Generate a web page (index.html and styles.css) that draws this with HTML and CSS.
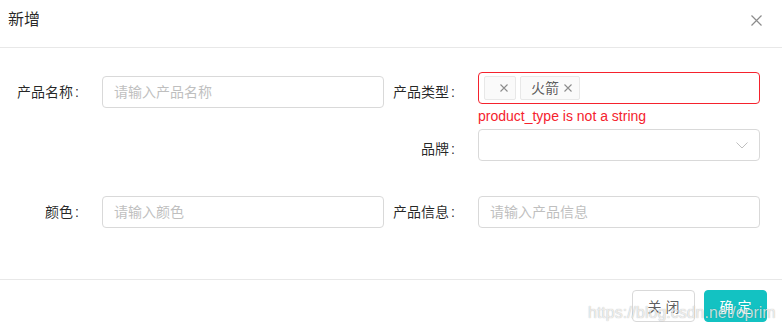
FILE: index.html
```html
<!DOCTYPE html>
<html lang="zh">
<head>
<meta charset="utf-8">
<title>新增</title>
<link rel="stylesheet" href="styles.css">
</head>
<body>
<div class="modal">
  <div class="modal-header">
    <span class="modal-title">新增</span>
    <button class="modal-close" aria-label="关闭">
      <svg width="11" height="11" viewBox="0 0 11 11"><path d="M0.5 0.5 L10.5 10.5 M10.5 0.5 L0.5 10.5" stroke="#8c8c8c" stroke-width="1.2" fill="none"/></svg>
    </button>
  </div>
  <div class="modal-body">
    <div class="form-row row-first">
      <label class="form-label">产品名称<span class="colon">:</span></label>
      <div class="form-control"><input class="input" placeholder="请输入产品名称"></div>
      <label class="form-label">产品类型<span class="colon">:</span></label>
      <div class="form-control control-raised">
        <div class="select select-error">
          <span class="tag"><span class="tag-text"></span><svg class="tag-remove" width="8" height="8" viewBox="0 0 8 8"><path d="M0.5 0.5 L7.5 7.5 M7.5 0.5 L0.5 7.5" stroke="#8c8c8c" stroke-width="1.1" fill="none"/></svg></span>
          <span class="tag"><span class="tag-text">火箭</span><svg class="tag-remove" width="8" height="8" viewBox="0 0 8 8"><path d="M0.5 0.5 L7.5 7.5 M7.5 0.5 L0.5 7.5" stroke="#8c8c8c" stroke-width="1.1" fill="none"/></svg></span>
        </div>
        <div class="error-text">product_type is not a string</div>
      </div>
    </div>
    <div class="form-row row-brand">
      <div class="form-label"></div>
      <div class="form-control"></div>
      <label class="form-label">品牌<span class="colon">:</span></label>
      <div class="form-control control-raised">
        <div class="select">
          <svg class="arrow" width="12" height="7" viewBox="0 0 12 7"><path d="M0.5 0.5 L6 6 L11.5 0.5" stroke="#bfbfbf" stroke-width="1" fill="none"/></svg>
        </div>
      </div>
    </div>
    <div class="form-row row-third">
      <label class="form-label">颜色<span class="colon">:</span></label>
      <div class="form-control"><input class="input" placeholder="请输入颜色"></div>
      <label class="form-label">产品信息<span class="colon">:</span></label>
      <div class="form-control"><input class="input" placeholder="请输入产品信息"></div>
    </div>
  </div>
  <div class="modal-footer">
    <button class="btn">关 闭</button>
    <button class="btn btn-primary">确 定</button>
    <span class="watermark">https://blog.csdn.net/oprim</span>
  </div>
</div>
</body>
</html>
```
FILE: styles.css
```css
* { box-sizing: border-box; }
html, body { margin: 0; padding: 0; background: #fff; }
body {
  font-family: "Liberation Sans", "Noto Sans CJK SC", sans-serif;
  font-size: 14px;
  color: rgba(0,0,0,0.85);
}
.modal { width: 782px; height: 331px; }
.modal-header {
  height: 48px;
  border-bottom: 1px solid #e8e8e8;
  display: flex;
  align-items: flex-start;
  justify-content: space-between;
  padding: 9px 20px 0 8px;
}
.modal-title { font-size: 16px; line-height: 22px; }
.modal-close {
  border: 0; background: none; padding: 0; margin-top: 6px;
  width: 11px; height: 11px; display: block; cursor: pointer;
}
.modal-close svg { display: block; }
.modal-body { height: 231px; padding-top: 28px; }
.form-row {
  display: grid;
  grid-template-columns: 102px 282px 94px 282px;
  align-items: start;
}
.row-brand { margin-top: 7px; }
.row-third { margin-top: 31px; }
.form-label {
  height: 32px;
  line-height: 32px;
  text-align: right;
  padding-right: 23px;
  white-space: nowrap;
}
.colon { margin-left: 2px; }
.control-raised { margin-top: -4px; }
.input {
  display: block;
  width: 100%;
  height: 32px;
  border: 1px solid #d9d9d9;
  border-radius: 4px;
  padding: 4px 11px;
  font: inherit;
  color: rgba(0,0,0,0.65);
  outline: none;
}
.input::placeholder { color: #bfbfbf; }
.select {
  position: relative;
  height: 32px;
  border: 1px solid #d9d9d9;
  border-radius: 4px;
  display: flex;
  align-items: flex-start;
  padding: 3px 5px;
  gap: 4px;
}
.select-error { border-color: #f5222d; }
.tag {
  position: relative;
  height: 24px;
  line-height: 22px;
  background: #fafafa;
  border: 1px solid #e8e8e8;
  border-radius: 2px;
  padding: 0 20px 0 10px;
  color: rgba(0,0,0,0.65);
  white-space: nowrap;
}
.tag-remove {
  position: absolute;
  right: 7px;
  top: 7px;
  display: block;
}
.arrow { position: absolute; right: 11px; top: 12px; }
.error-text {
  color: #f5222d;
  line-height: 20px;
  margin-top: 2px;
}
.modal-footer {
  position: relative;
  border-top: 1px solid #e8e8e8;
  padding: 10px 15px 0 0;
  display: flex;
  justify-content: flex-end;
  gap: 9px;
}
.btn {
  width: 63px;
  height: 32px;
  border: 1px solid #d9d9d9;
  border-radius: 4px;
  background: #fff;
  font: inherit;
  color: rgba(0,0,0,0.65);
  padding: 0;
  cursor: pointer;
}
.btn-primary { background: #13c2c2; border-color: #13c2c2; color: #fff; }
.watermark {
  position: absolute;
  left: 588px;
  top: 24px;
  font-size: 16px;
  color: rgba(255,255,255,0.75);
  text-shadow: 0 0 1px rgba(0,0,0,0.35);
  pointer-events: none;
  white-space: nowrap;
}
```
